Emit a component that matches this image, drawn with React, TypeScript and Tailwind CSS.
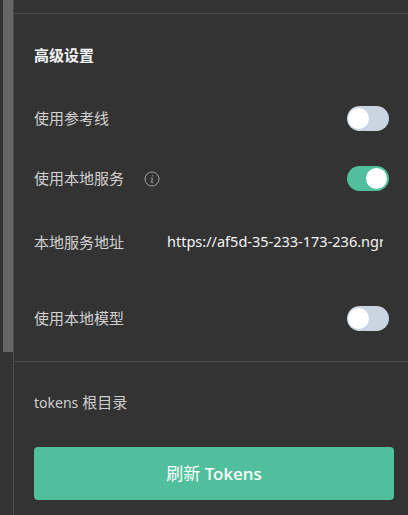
function Toggle({ on }: { on?: boolean }) {
  return (
    <div className={`flex h-[25px] w-[42px] items-center rounded-full px-[1px] ${on ? "justify-end bg-[#52bf9c]" : "justify-start bg-[#cbd5e1]"}`}>
      <div className={`h-[21px] w-[21px] rounded-full bg-white ${on ? "mr-[1px]" : ""}`} />
    </div>
  );
}

function Row({ label, className, children }: { label: React.ReactNode; className?: string; children?: React.ReactNode }) {
  return (
    <div className={`flex items-center justify-between pl-5 pr-[19px] ${className ?? ""}`}>
      {label}
      {children}
    </div>
  );
}

export default function App() {
  return (
    <div className="flex h-[515px] w-[408px] overflow-hidden bg-[#333333] font-['Noto_Sans','Noto_Sans_CJK_SC',sans-serif] text-[15px] text-[#d1d1d1]">
      <div className="w-[13px] shrink-0 pl-[3px]">
        <div className="h-[352px] w-[10px] bg-[#666666]" />
      </div>
      <div className="flex min-w-0 flex-1 flex-col border-l border-[#4a4a4a]">
        <div className="h-[14px] border-b border-[#4d4d4d]" />
        <div className="flex h-[348px] flex-col border-b border-[#4d4d4d]">
          <div className="mt-[31px] pl-5 leading-5 font-bold text-[#f3f4f6]">高级设置</div>
          <Row label={<span>使用参考线</span>} className="mt-[41px] h-[25px]"><Toggle /></Row>
          <Row
            className="mt-[35px] h-[25px]"
            label={
              <span className="flex items-center">
                使用本地服务
                <svg viewBox="0 0 16 16" className="ml-[20px] h-[16px] w-[16px]" fill="none" stroke="#a3a3a3">
                  <circle cx="8" cy="8" r="7" strokeWidth="1" />
                  <path d="M8.6 4.2v1.1M7 7.2h1.4l-.8 4.4h1.4" strokeWidth="1" />
                </svg>
              </span>
            }
          >
            <Toggle on />
          </Row>
          <div className="mt-[39px] flex h-[24px] items-center pl-5">
            <span className="w-[133px] shrink-0">本地服务地址</span>
            <span className="w-[216px] overflow-hidden whitespace-nowrap text-[14.5px] text-[#f5f5f5]">https://af5d-35-233-173-236.ngrok.io</span>
          </div>
          <Row label={<span>使用本地模型</span>} className="mt-[52px] h-[25px]"><Toggle /></Row>
        </div>
        <div className="mt-[30px] h-5 pl-5 leading-5 text-[#cfcfcf]"><span className="text-[14px]">tokens</span> 根目录</div>
        <button className="ml-5 mt-[35px] h-[53px] w-[360px] rounded-[4px] bg-[#52bf9c] text-[17px] text-white">刷新 <span className="font-medium">Tokens</span></button>
      </div>
    </div>
  );
}
